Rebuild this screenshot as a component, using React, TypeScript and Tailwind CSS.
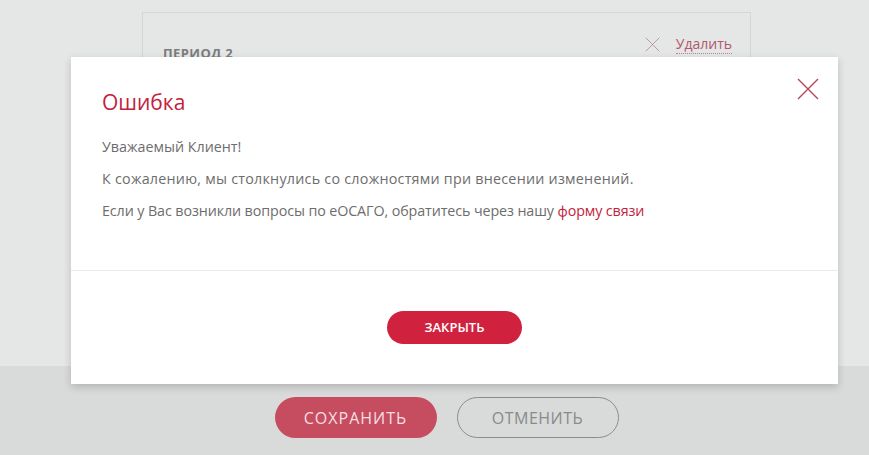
import React from 'react';

const font = { fontFamily: '"Open Sans", "Noto Sans", Arial, sans-serif' };

const Cross: React.FC<{ size: number; className?: string; stroke?: number }> = ({ size, className, stroke = 1.3 }) => (
  <svg width={size} height={size} viewBox="0 0 22 22" className={className} fill="none">
    <path d="M1 1L21 21M21 1L1 21" stroke="currentColor" strokeWidth={stroke} />
  </svg>
);

const ErrorModal: React.FC = () => (
  <div className="absolute left-[71px] top-[57px] w-[767px] h-[327px] bg-white shadow-[0_3px_8px_rgba(0,0,0,0.18)] flex flex-col">
    <button className="absolute right-[19px] top-[21px] text-[#b7475c]">
      <Cross size={22} stroke={1.4} />
    </button>
    <div className="px-[31px] pt-[31px] pb-[49px] border-b border-[#e9e9e9]">
      <h2 className="text-[21px] leading-[28px] text-[#c4213d] font-normal">Ошибка</h2>
      <div className="mt-[21px] flex flex-col gap-[12px] text-[14.3px] leading-[20px] text-[#6d6d6d]">
        <p>Уважаемый Клиент!</p>
        <p className="tracking-[0.25px]">К сожалению, мы столкнулись со сложностями при внесении изменений.</p>
        <p className="tracking-[-0.1px]">
          Если у Вас возникли вопросы по еОСАГО, обратитесь через нашу{' '}
          <a className="text-[#c4213d]">форму связи</a>
        </p>
      </div>
    </div>
    <div className="flex justify-center pt-[40px]">
      <button className="w-[135px] h-[33px] rounded-full bg-[#d0223e] text-white text-[13px] font-semibold uppercase">
        Закрыть
      </button>
    </div>
  </div>
);

export default function App() {
  return (
    <div className="relative w-full h-[455px] overflow-hidden" style={font}>
      <div className="h-[366px] bg-[#e5e6e6] pt-[12px]">
        <div className="ml-[142px] w-[609px] h-[354px] border border-b-0 border-[#d5d6d6]">
          <div className="flex items-start justify-between pl-[20px] pr-[18px] pt-[22px]">
            <div className="mt-[9px] text-[13px] font-bold uppercase text-[#7b7c7c] tracking-[0.4px]">Период 2</div>
            <div className="flex items-center gap-[16px]">
              <Cross size={15} stroke={1.2} className="text-[#b08a92]" />
              <span className="text-[14px] leading-[18px] text-[#b05a6c] border-b border-dotted border-[#b08a92]">Удалить</span>
            </div>
          </div>
        </div>
      </div>
      <div className="h-[89px] bg-[#d9dada]">
        <div className="ml-[142px] w-[609px] flex justify-center gap-[20px] pt-[31px]">
          <button className="w-[162px] h-[41px] rounded-full bg-[#c64d5f] text-[#f6dfe3] text-[16px] tracking-[1px] uppercase">
            Сохранить
          </button>
          <button className="w-[162px] h-[41px] rounded-full border border-[#8c8c8c] text-[#8a8a8a] text-[16px] tracking-[0.5px] uppercase">
            Отменить
          </button>
        </div>
      </div>
      <ErrorModal />
    </div>
  );
}
